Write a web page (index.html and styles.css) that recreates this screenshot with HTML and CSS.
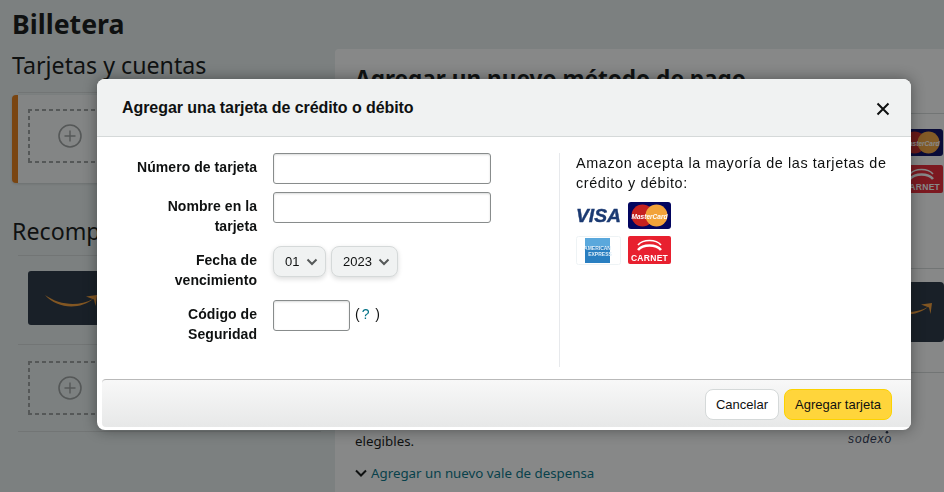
FILE: index.html
```html
<!DOCTYPE html>
<html lang="es">
<head>
<meta charset="utf-8">
<title>Billetera</title>
<link rel="stylesheet" href="styles.css">
</head>
<body>
<div class="page">
  <h1 class="title">Billetera</h1>
  <div class="columns">
    <aside class="left">
      <h2 class="sub">Tarjetas y cuentas</h2>
      <div class="rule rule-first"></div>
      <div class="card-slot">
        <div class="dashed"><svg class="plus" viewBox="0 0 24 24"><circle cx="12" cy="12" r="11" /><path d="M12 6.5v11M6.5 12h11" /></svg></div>
      </div>
      <h2 class="sub sub-rewards">Recompensas</h2>
      <div class="rule"></div>
      <div class="reward">
        <div class="amz"><svg class="smile" viewBox="0 0 54 16"><path d="M0 1C14 11 33 13 48 5 35 16 12 15 0 1z" /><path d="M41 2.5 52 1 50.5 12 49 5.5z" /></svg></div>
      </div>
      <div class="rule"></div>
      <div class="reward reward-add">
        <div class="dashed"><svg class="plus" viewBox="0 0 24 24"><circle cx="12" cy="12" r="11" /><path d="M12 6.5v11M6.5 12h11" /></svg></div>
      </div>
      <div class="rule"></div>
    </aside>
    <main class="panel">
      <h2 class="panel-title">Agregar un nuevo método de pago</h2>
      <div class="rule panel-rule"></div>
      <div class="panel-logos">
        <svg class="logo-mc" viewBox="0 0 43 27"><use href="#mc" /></svg>
        <svg class="logo-car" viewBox="0 0 43 28"><use href="#carnet" /></svg>
      </div>
      <div class="rule panel-rule2"></div>
      <div class="panel-amz"><svg class="smile" viewBox="0 0 54 16"><path d="M0 1C14 11 33 13 48 5 35 16 12 15 0 1z" /><path d="M41 2.5 52 1 50.5 12 49 5.5z" /></svg></div>
      <div class="rule panel-rule3"></div>
      <div class="vales">
        <p class="eleg">elegibles.</p>
        <svg class="sodexo" viewBox="0 0 44 13"><circle cx="39" cy="1.2" r="1.3" fill="#1d2a4a" /><text x="0" y="12" class="sodexo-t">sodexo</text></svg>
      </div>
      <p class="addlink"><svg class="chev" viewBox="0 0 12 8"><path d="M1 1.5l5 5 5-5" /></svg><span>Agregar un nuevo vale de despensa</span></p>
    </main>
  </div>
</div>

<div class="overlay"></div>

<section class="modal">
  <header class="m-head">
    <h3>Agregar una tarjeta de crédito o débito</h3>
    <svg class="close" viewBox="0 0 14 14"><path d="M1.5 1.5l11 11M12.5 1.5l-11 11" /></svg>
  </header>
  <div class="m-body">
    <form class="form">
      <div class="row row-a"><label>Número de tarjeta</label><input class="inp inp-wide" type="text"></div>
      <div class="row row-b"><label>Nombre en la tarjeta</label><input class="inp inp-wide" type="text"></div>
      <div class="row row-c"><label>Fecha de vencimiento</label>
        <div class="dates">
          <button type="button" class="sel sel-m">01<svg class="sel-c" viewBox="0 0 12 8"><path d="M1.5 1.5l4.5 4.5 4.5-4.5" /></svg></button>
          <button type="button" class="sel sel-y">2023<svg class="sel-c" viewBox="0 0 12 8"><path d="M1.5 1.5l4.5 4.5 4.5-4.5" /></svg></button>
        </div>
      </div>
      <div class="row row-d"><label>Código de Seguridad</label><input class="inp inp-cvv" type="text"><span class="help">(<a>?</a> )</span></div>
    </form>
    <div class="info">
      <p>Amazon acepta la mayoría de las tarjetas de crédito y débito:</p>
      <div class="logos">
        <svg class="lg" viewBox="0 0 45 27"><text x="0" y="20" textLength="45" lengthAdjust="spacingAndGlyphs" class="visa">VISA</text></svg>
        <svg class="lg lg-mc" viewBox="0 0 43 27">
          <defs>
            <g id="mc">
              <rect width="43" height="27" rx="3" fill="#02055f" />
              <circle cx="14.5" cy="13.5" r="11" fill="#c5211f" />
              <circle cx="28.5" cy="13.5" r="11" fill="#f2a33a" />
              <text x="21.5" y="16.5" textLength="36" lengthAdjust="spacingAndGlyphs" class="mc-t">MasterCard</text>
            </g>
            <g id="carnet">
              <rect width="43" height="28" rx="2" fill="#e8202f" />
              <path d="M10 9c5-6 18-6 23 0" class="car-arc" />
              <path d="M10 14c5-6 18-6 23 0" class="car-arc car-arc2" />
              <text x="21.5" y="24.5" class="car-t">CARNET</text>
            </g>
          </defs>
          <use href="#mc" />
        </svg>
        <svg class="lg lg-amex" viewBox="0 0 45 29">
          <rect x=".5" y=".5" width="44" height="28" rx="2" fill="#fff" stroke="#eef3f5" />
          <rect x="9" y="2" width="25" height="25" fill="#2a7fc1" />
          <rect x="9" y="2" width="25" height="9" fill="#5aa8dc" />
          <text x="21.5" y="14" class="amex-t">AMERICAN</text>
          <text x="24" y="20" class="amex-t">EXPRESS</text>
        </svg>
        <svg class="lg lg-mc lg-car" viewBox="0 0 43 28"><use href="#carnet" /></svg>
      </div>
    </div>
  </div>
  <footer class="m-foot">
    <button type="button" class="btn btn-cancel">Cancelar</button>
    <button type="button" class="btn btn-add">Agregar tarjeta</button>
  </footer>
</section>
</body>
</html>
```

FILE: styles.css
```css
* { box-sizing: border-box; }
html, body { margin: 0; height: 100%; overflow: hidden; }
body { font-family: "Noto Sans", sans-serif; color: #0f1111; background: #e9efef; }
h1, h2, h3, p { margin: 0; }

.page { height: 492px; overflow: hidden; }
.title { font-size: 26.7px; line-height: 36px; font-weight: 700; padding: 6px 0 0 12px; height: 49px; }
.columns { display: flex; height: 443px; }
.left { width: 321px; padding-left: 12px; flex: none; }
.sub { font-size: 23.2px; line-height: 32px; font-weight: 400; }
.rule { height: 1px; background: #d5d9d9; }
.left .rule { margin-left: 6px; }
.rule-first { margin-top: 11px; }
.card-slot { height: 88px; margin-top: 2px; background: #f7f8f8; border-left: 6px solid #e47911; border-radius: 4px 0 0 4px; padding: 14px 0 0 10px; box-shadow: 0 1px 3px rgba(0,0,0,.15); }
.dashed {
  width: 260px; height: 54px; display: flex; align-items: center; padding-left: 30px;
  background-image:
    linear-gradient(90deg, #9a9e9e 4px, transparent 4px),
    linear-gradient(90deg, #9a9e9e 4px, transparent 4px),
    linear-gradient(#9a9e9e 4px, transparent 4px),
    linear-gradient(#9a9e9e 4px, transparent 4px);
  background-size: 7px 2px, 7px 2px, 2px 7px, 2px 7px;
  background-position: 0 0, 0 100%, 0 0, 100% 0;
  background-repeat: repeat-x, repeat-x, repeat-y, repeat-y;
}
.plus { width: 24px; height: 24px; fill: none; stroke: #9a9e9e; stroke-width: 1.6; overflow: visible; }
.plus path { stroke-width: 1.4; }
.sub-rewards { margin-top: 32px; }
.sub-rewards + .rule { margin-top: 8px; }
.reward { height: 88px; padding: 15px 0 0 16px; }
.reward-add { height: 86px; padding-top: 16px; }
.amz { width: 200px; height: 54px; background: #232f3e; border-radius: 3px; padding: 23px 0 0 17px; }
.smile { width: 54px; height: 16px; fill: #f59b33; display: block; }

.panel { flex: 1; margin-left: 14px; background: #fff; border-radius: 4px 0 0 0; padding: 14px 0 0 20px; position: relative; }
.panel-title { font-size: 22.6px; line-height: 32px; font-weight: 700; }
.panel-rule { margin-top: 18px; }
.panel-logos { display: flex; flex-direction: column; align-items: flex-end; gap: 9px; padding: 15px 1px 0 0; height: 154px; }
.logo-mc { width: 43px; height: 27px; }
.logo-car { width: 43px; height: 28px; }
.panel-amz { height: 60px; margin-top: 13px; background: #232f3e; border-radius: 4px; display: flex; justify-content: flex-end; align-items: center; padding: 0 10px 4px 0; }
.panel-rule3 { margin-top: 30px; }
.vales { display: flex; justify-content: space-between; align-items: flex-end; height: 78px; padding-right: 52px; }
.eleg { font-size: 13.3px; line-height: 20px; }
.sodexo { width: 44px; height: 13px; overflow: visible; margin-bottom: 7px; }
.sodexo-t { font-family: "Liberation Sans", sans-serif; font-size: 12px; font-style: italic; fill: #2a3350; letter-spacing: .9px; }
.addlink { margin-top: 12px; font-size: 13.3px; line-height: 20px; color: #007185; display: flex; align-items: center; gap: 4px; }
.chev { width: 12px; height: 8px; fill: none; stroke: #0f1111; stroke-width: 2; }

.overlay { position: fixed; inset: 0; background: rgba(15,17,17,.5); }

.modal { position: absolute; left: 97px; top: 79px; width: 814px; height: 351px; background: #fff; border-radius: 8px; box-shadow: 0 0 14px rgba(15,17,17,.45); overflow: hidden; font-family: "Liberation Sans", Arial, sans-serif; color: #0f1111; display: flex; flex-direction: column; }
.m-head { height: 58px; flex: none; background: #f0f2f2; border-bottom: 1px solid #d5d9d9; display: flex; align-items: center; justify-content: space-between; padding: 0 21px 0 25px; }
.m-head h3 { font-size: 16px; font-weight: 700; letter-spacing: -.07px; }
.close { width: 14px; height: 14px; margin-top: 3px; fill: none; stroke: #0f1111; stroke-width: 2; }

.m-body { flex: 1; display: flex; padding-top: 16px; }
.form { width: 463px; flex: none; border-right: 1px solid #e7e9ec; height: 214px; display: flex; flex-direction: column; }
.row { display: flex; gap: 16px; padding-left: 35px; height: 54px; flex: none; }
.row-a { height: 39px; }
label { width: 125px; flex: none; text-align: right; font-size: 14px; line-height: 20px; font-weight: 700; letter-spacing: .05px; padding-top: 4px; }
.inp { display: block; border: 1px solid #888c8c; border-radius: 3px; height: 31px; background: #fff; padding: 0; box-shadow: inset 0 1px 2px rgba(15,17,17,.15); }
.inp-wide { width: 218px; }
.dates { display: flex; gap: 5px; height: 31px; }
.sel { display: flex; align-items: center; justify-content: space-between; height: 31px; padding: 0 7px 0 11px; background: #f0f2f2; border: 1px solid #d5d9d9; border-radius: 8px; box-shadow: 0 2px 5px rgba(15,17,17,.15); font: 13px "Liberation Sans", Arial, sans-serif; color: #0f1111; }
.sel-m { width: 53px; }
.sel-y { width: 67px; }
.sel-c { width: 12px; height: 8px; fill: none; stroke: #565959; stroke-width: 2; }
.inp-cvv { width: 77px; }
.help { margin-left: -11px; font-size: 14px; line-height: 28px; color: #0f1111; }
.help a { color: #007185; padding: 0 2px; }

.info { padding-left: 16px; width: 350px; }
.info p { font-size: 14.4px; line-height: 20px; width: 330px; letter-spacing: .6px; }
.logos { display: grid; grid-template-columns: 45px 43px; column-gap: 7px; row-gap: 7px; margin-top: 9px; }
.lg { width: 45px; height: 27px; display: block; }
.lg-mc { width: 43px; }
.lg-car { height: 28px; }
.lg-amex { height: 29px; }
.visa { font: italic 700 18px "Liberation Sans", Arial, sans-serif; fill: #1b3a72; stroke: #1b3a72; stroke-width: .4; }
.mc-t { font: italic 700 8px "Liberation Sans", Arial, sans-serif; fill: #fff; text-anchor: middle; }
.car-t { font: 700 8.5px "Liberation Sans", Arial, sans-serif; fill: #fff; text-anchor: middle; letter-spacing: .3px; }
.car-arc { fill: none; stroke: #fff; stroke-width: 1.6; }
.car-arc2 { stroke-width: 2.6; }
.amex-t { font: 700 5px "Liberation Sans", Arial, sans-serif; fill: #dcecf7; text-anchor: middle; }

.m-foot { height: 48px; flex: none; margin: 0 0 3px 5px; border-top: 1px solid #b9b9b9; border-radius: 4px 0 4px 4px; background: linear-gradient(#f8f8f8, #e7e8e8); display: flex; justify-content: flex-end; align-items: center; gap: 5px; padding: 1px 19px 0 0; }
.btn { height: 31px; border-radius: 8px; font: 13px "Liberation Sans", Arial, sans-serif; color: #0f1111; padding: 0; }
.btn-cancel { width: 74px; background: #fff; border: 1px solid #d5d9d9; }
.btn-add { width: 108px; background: #ffd53b; border: 1px solid #fcd200; }
```
